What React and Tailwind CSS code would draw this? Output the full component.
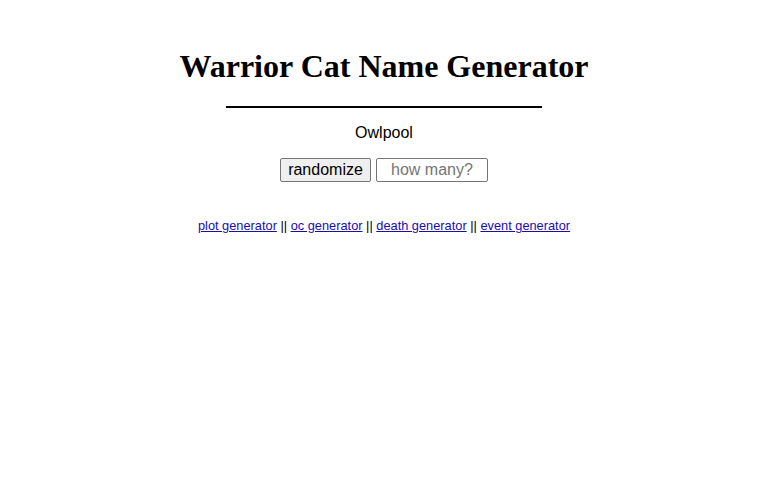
export default function App() {
  return (
    <div className="w-[768px] h-[480px] bg-white flex flex-col items-center">
      <h1 className="mt-[48px] text-[32px] leading-[37px] font-bold text-black" style={{ fontFamily: '"Liberation Serif", serif' }}>
        Warrior Cat Name Generator
      </h1>
      <div className="mt-[21px] w-[316px] h-[2px] bg-black"></div>
      <div className="mt-[16px] text-[16px] leading-[18px] text-black" style={{ fontFamily: '"Liberation Sans", sans-serif' }}>
        Owlpool
      </div>
      <div className="mt-[16px] flex items-center gap-[5px]" style={{ fontFamily: '"Liberation Sans", sans-serif' }}>
        <button className="h-[24px] w-[91px] bg-[#efefef] border border-[#767676] rounded-[2px] text-[16px] leading-[18px] text-black flex items-center justify-center">
          randomize
        </button>
        <input
          placeholder="how many?"
          className="h-[24px] w-[112px] border border-[#767676] rounded-[2px] text-[16px] px-[14px] text-black placeholder:text-[#757575] outline-none"
        />
      </div>
      <div className="mt-[36px] text-[12.8px] leading-[15px] text-black" style={{ fontFamily: '"Liberation Sans", sans-serif' }}>
        <a href="#" className="text-[#1a0dab] underline">plot generator</a> || <a href="#" className="text-[#1a0dab] underline">oc generator</a> || <a href="#" className="text-[#1a0dab] underline">death generator</a> || <a href="#" className="text-[#1a0dab] underline">event generator</a>
      </div>
    </div>
  );
}
